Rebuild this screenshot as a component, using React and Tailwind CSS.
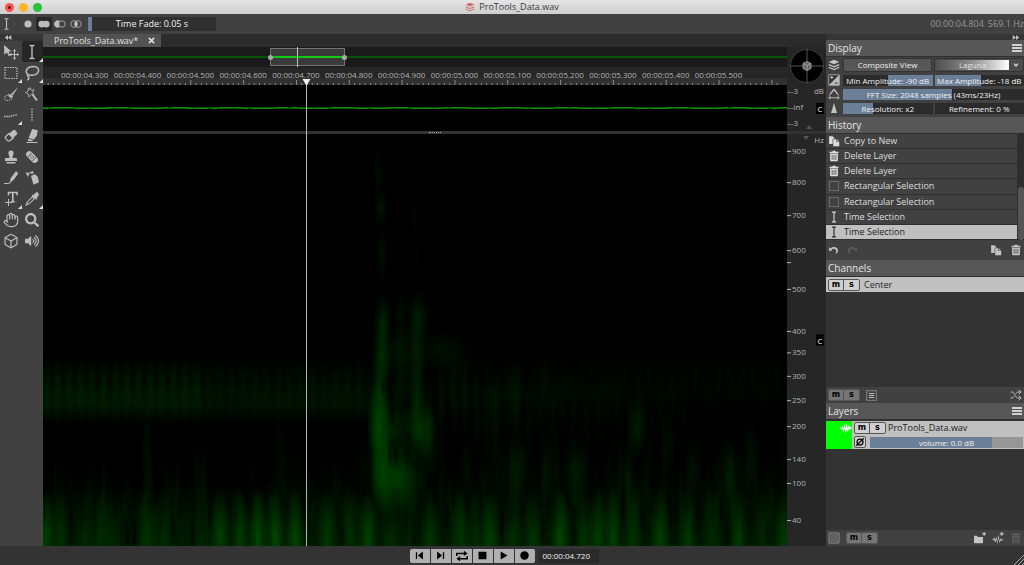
import { Hand, Box, Shuffle } from "lucide-react";
import { FaSearch, FaVolumeUp } from "react-icons/fa";
import clsx from "clsx";

const overviewWindow = { start: 30.5, width: 10.1, cursor: 34.1 };
const playhead = 35.4;

const timeLabels = [
  "00:00:04.300", "00:00:04.400", "00:00:04.500", "00:00:04.600", "00:00:04.700",
  "00:00:04.800", "00:00:04.900", "00:00:05.000", "00:00:05.100", "00:00:05.200",
  "00:00:05.300", "00:00:05.400", "00:00:05.500",
];

const frequencies = [
  [900, 4.1], [800, 11.7], [700, 19.7], [600, 28.2], [500, 37.6], [400, 47.8], [350, 53],
  [300, 58.7], [250, 64.6], [200, 70.9], [140, 78.9], [100, 84.7], [40, 93.7],
];

const history = [
  { name: "Copy to New", icon: "copy" },
  { name: "Delete Layer", icon: "trash" },
  { name: "Delete Layer", icon: "trash" },
  { name: "Rectangular Selection", icon: "square" },
  { name: "Rectangular Selection", icon: "square" },
  { name: "Time Selection", icon: "beam" },
  { name: "Time Selection", icon: "beam", active: true },
];

const tools = [
  { name: "Move", icon: "move" },
  { name: "Time selection", icon: "beam", active: true, more: true },
  { name: "Rectangle selection", icon: "marquee", more: true },
  { name: "Lasso", icon: "lasso", more: true },
  { name: "Brush selection", icon: "brushSelect" },
  { name: "Magic wand", icon: "wand" },
  { name: "Harmonics", icon: "harmonics", more: true },
  { name: "Frequency line", icon: "dots" },
  { name: "Eraser", icon: "eraser" },
  { name: "Amplify", icon: "marker" },
  { name: "Clone stamp", icon: "stamp" },
  { name: "Heal", icon: "bandage" },
  { name: "Pencil", icon: "pencil" },
  { name: "Spray", icon: "spray" },
  { name: "Text", icon: "text", more: true },
  { name: "Pick", icon: "dropper", more: true },
  { name: "Pan", icon: "hand" },
  { name: "Zoom", icon: "zoom" },
  { name: "3D", icon: "cube" },
  { name: "Play", icon: "speaker" },
];

const icons = {
  beam: <path d="M5.500 1.500h1.700l.8.600.8-.600h1.700M8 2v12M5.500 14.500h1.700l.8-.600.8.600h1.700" fill="none" stroke="currentColor" strokeWidth="1.400" />,
  move: (
    <>
      <path d="M1 1l7.500 6.500-3 .2 1.800 3.700-1.500.8-1.900-3.800L1.300 10.700z" />
      <path d="M11.500 6v8.500M7.500 10.500h8" stroke="currentColor" strokeWidth="1" />
      <path d="M11.500 5l1.700 2.200H9.800zM11.500 16l1.700-2.200H9.800zM6.300 10.500l2.100-1.700v3.400zM16 10.500l-2-1.700v3.400z" />
    </>
  ),
  marquee: <rect x="2" y="2.500" width="12" height="11" fill="none" stroke="currentColor" strokeDasharray="1.500 1" strokeWidth="1.200" />,
  lasso: <path d="M4.500 10C1 8 1.500 3.500 6 2c5-1.500 9.500.5 8.500 4-1 3.500-5 4.700-9 3.900-2-.6-2.500 1-1.300 1.700 1.300.8.8 2.400-.8 3.400" fill="none" stroke="currentColor" strokeWidth="1.500" />,
  brushSelect: (
    <>
      <path d="M15 1L10.500 8.500 9 9.500 7.800 8.500z" />
      <path d="M6.500 8.200l3.300 2.500-2 1.300-2.800-2z" />
      <ellipse cx="5.500" cy="11.500" rx="4" ry="2.800" fill="none" stroke="currentColor" strokeDasharray="1.400 1" transform="rotate(-25 5.500 11.500)" />
    </>
  ),
  wand: (
    <>
      <path d="M8.500 8.500l4.500 6" stroke="currentColor" strokeWidth="2" />
      <path d="M6 1.500l1.200 2.700 3-.5-1.800 2.500 1.500 2.700-3-.3L5 11l-.6-3L1.500 6.700l2.600-1.400L4 2.500l1.500 1z" fill="none" stroke="currentColor" strokeWidth=".8" />
    </>
  ),
  harmonics: <path d="M1 9.500h1.500m.8 0h1.500m.8 0h1.500m.7-.5h1.500m.8-.7h1.500m.8-.5h1.500" stroke="currentColor" strokeWidth="1.300" />,
  dots: <path d="M8 1.500v13" stroke="currentColor" strokeWidth="1.300" strokeDasharray="1.500 1.200" />,
  eraser: (
    <>
      <path d="M6 5.500L10.500 2q1-.7 1.700.2l2 2.500q.6.900-.2 1.600l-4 4z" />
      <path d="M6 5.500L2.800 8.500q-1 .9-.2 1.900l2 2.200q.9.900 1.900.1L10 10.300z" fill="none" stroke="currentColor" strokeWidth="1.300" />
    </>
  ),
  marker: (
    <>
      <path d="M8.200 1l5.500 1.300-.8 5.500-3.200 4-5-2z" />
      <path d="M4.300 10.400l4.700 1.900-1.200 1-4-.3zM2.500 14h11v1h-11z" />
    </>
  ),
  stamp: <path d="M8 1.500a2.600 2.600 0 0 1 2.600 2.700c0 1.500-1.200 2-1 4.800H13q1 0 1 1v2H2v-2q0-1 1-1h3.400c.2-2.800-1-3.300-1-4.800A2.600 2.600 0 0 1 8 1.500zM3.500 13h9v1.500h-9z" />,
  bandage: (
    <g transform="rotate(45 8 8)">
      <rect x="1" y="4.800" width="14" height="6.400" rx="3.200" />
      <path d="M5 5v6M11 5v6" stroke="#414141" strokeWidth=".8" />
      <path d="M6.500 7h1m1 0h1m-3 2h1m1 0h1" stroke="#414141" strokeWidth="1" />
    </g>
  ),
  pencil: (
    <>
      <path d="M14.500 2.500l-1-1q-.7-.3-1.300.5L7.500 8.500 7 12l3.300-1.700L15 4z" />
      <path d="M1 13.500h3l3-.5 2.500-3.500" fill="none" stroke="currentColor" />
    </>
  ),
  spray: (
    <>
      <path d="M1.500 2.500l4 .5-1.500 4zM6.500 2l2.300-1 1 2-2 1zM7 6l3.500-1.700 3 2 1.500 6-5.500 2.500z" />
      <path d="M5 3l3-.5" stroke="currentColor" strokeWidth="1" />
    </>
  ),
  text: (
    <>
      <path d="M5.500 4.200V1.500h8.500v2.700M9.800 1.500v9.200M7.800 10.800h4" fill="none" stroke="currentColor" strokeWidth="1.600" />
      <path d="M2 11.500h7M5.500 8v7" stroke="currentColor" strokeWidth="1" />
    </>
  ),
  dropper: (
    <>
      <path d="M14.300 1.700q-1.500-1.200-3 .3L9.500 4l-.8-.6-1 1 4.600 4.400 1-1-.7-.8 1.700-1.900q1.200-1.200 0-2.400z" />
      <path d="M8.300 5.800L3.500 10.700 2 14l3.300-1.400 5-4.800z" fill="none" stroke="currentColor" strokeWidth="1.100" />
    </>
  ),
  copy: (
    <>
      <path d="M1.500 1.500H6L8.500 4v1H6.200v7H1.500z" />
      <path d="M7 5.800h4v3.500h4v5.700H7z" />
      <path d="M11.800 5.500l3.200 3h-3.200z" />
    </>
  ),
  trash: (
    <>
      <path d="M6 1h4v1.300h4v1.900H2V2.300h4zM2.800 5h10.400v8.500q0 1.500-1.500 1.500H4.300q-1.500 0-1.500-1.500z" />
      <path d="M5.500 6.500v6.700M8 6.500v6.700M10.500 6.500v6.700" stroke="#414141" strokeWidth="1" />
    </>
  ),
  square: <rect x="2" y="2" width="12" height="12" fill="none" stroke="#707070" strokeWidth="1.200" />,
  layers: (
    <>
      <path d="M8 1l7 3-7 3-7-3z" />
      <path d="M1 7.500l7 3 7-3M1 11l7 3 7-3" fill="none" stroke="currentColor" strokeWidth="1.600" />
    </>
  ),
  contrast: (
    <>
      <path d="M1 1h14v14H1z" fill="#333" stroke="#bbb" />
      <path d="M15 1v14H1z" fill="#bbb" />
      <path d="M3 4.500h4M5 2.500v4" stroke="#ccc" strokeWidth="1.300" />
      <path d="M9 12h4" stroke="#333" strokeWidth="1.300" />
    </>
  ),
  fft: (
    <>
      <path d="M3 8l5-6 5 6" fill="none" stroke="currentColor" strokeWidth="1.600" />
      <path d="M1 13h14M3.500 11L1 13l2.500 2M12.500 11l2.500 2-2.500 2M3 8L2 10M13 8l1 2" fill="none" stroke="currentColor" strokeWidth="1.200" />
    </>
  ),
  cone: <path d="M8 1l2.500 9 1.500 4.500H4L5.500 10z" />,
  undo: <path d="M1.500 3v5.500h5L4.900 6.700C8 4 12 5.500 12 9c0 1.700-.7 3-2 4 3-.7 4.500-2.500 4.500-5 0-4.800-6-7-10.800-3z" />,
  wave: <path d="M0 7.500h2l1.200-3L4.500 9 6 2l1.500 7L8.800 0l1.500 9L12 3l1 4.500L14.200 6l.8 1.500h1v1.200h-1.500l-1 2-1.500-2-1.500 5L9 9.500 7.500 16 6 9l-1.500 5L3 9H0z" />,
  waveAdd: (
    <>
      <path d="M0 10l2-1 1-2 1.300 4L6 6l1.300 8L8.500 3 10 12l1.500-4 1 2H15v1.200h-3.500l-1.500 3L8.500 9l-1.200 7L6 10l-1.500 4L3 11z" />
      <path d="M13 0v5M10.500 2.500h5" stroke="currentColor" strokeWidth="1.600" />
    </>
  ),
  folderAdd: (
    <>
      <path d="M0 5h4l1 1.500h7V14q0 1-1 1H1q-1 0-1-1z" />
      <path d="M13.500 0v5M11 2.500h5" stroke="currentColor" strokeWidth="1.600" />
    </>
  ),
  list: (
    <>
      <rect x="1" y="1" width="14" height="14" fill="none" stroke="currentColor" strokeDasharray="1.500 1" strokeWidth="1.300" />
      <path d="M4 5h8M4 8h8M4 11h8" stroke="currentColor" strokeWidth="1.600" />
    </>
  ),
  phase: (
    <>
      <circle cx="8" cy="8" r="4.800" fill="none" stroke="currentColor" strokeWidth="2" />
      <path d="M2 14L14 2" stroke="currentColor" strokeWidth="2" />
    </>
  ),
  target: (
    <>
      <circle cx="8" cy="8" r="6" fill="none" stroke="currentColor" />
      <path d="M4 4l8 8M12 4l-8 8" stroke="currentColor" />
    </>
  ),
  circle: <circle cx="8" cy="8" r="4.800" />,
  union: (
    <>
      <circle cx="5" cy="8" r="4.500" />
      <circle cx="11" cy="8" r="4.500" />
    </>
  ),
  subtract: (
    <>
      <circle cx="10.500" cy="8" r="4.300" fill="none" stroke="currentColor" />
      <path d="M8 4.600A4.600 4.600 0 1 0 8 11.400a5 5 0 0 1 0-6.800z" />
    </>
  ),
  intersect: (
    <>
      <circle cx="5.500" cy="8" r="4.500" fill="none" stroke="currentColor" />
      <circle cx="10.500" cy="8" r="4.500" fill="none" stroke="currentColor" />
      <path d="M8 4.200a4.800 4.800 0 0 1 0 7.600 4.800 4.800 0 0 1 0-7.600z" />
    </>
  ),
  menu: <path d="M0 1.500h16v3.200H0zM0 6.400h16v3.200H0zM0 11.300h16v3.200H0z" />,
  toStart: <path d="M1.500 2h2.300v12H1.500zM14 1v14L5 8z" />,
  toEnd: <path d="M12.200 2h2.300v12h-2.300zM2 1v14l9-7z" />,
  loop: (
    <>
      <path d="M1 8V4.500h10M15 8v3.500H5" fill="none" stroke="currentColor" strokeWidth="2" />
      <path d="M10.500 1l5 3.500-5 3.500zM5.500 8l-5 3.500 5 3.500z" />
    </>
  ),
  stop: <path d="M1 1.500h14v13H1z" />,
  play: <path d="M3 1l12 7-12 7z" />,
  record: <circle cx="8" cy="8" r="7.500" />,
};

function Icon({ name, className = "size-4" }) {
  if (name === "hand") return <Hand className={className} strokeWidth={1.8} />;
  if (name === "cube") return <Box className={className} strokeWidth={1.8} />;
  if (name === "zoom") return <FaSearch className="size-3.5" />;
  if (name === "speaker") return <FaVolumeUp className="size-3.5" />;
  return (
    <svg viewBox="0 0 16 16" className={className} fill="currentColor" aria-hidden="true">
      {icons[name]}
    </svg>
  );
}

function FillSlider({ label, from = 0, to = 0, className = "bg-[#2b2b2b]" }) {
  return (
    <label className={clsx("relative flex h-[11px] flex-1 items-center justify-center", className)}>
      <span className="absolute inset-y-0 bg-[#6c7f99]" style={{ left: `${from}%`, width: `${to - from}%` }} />
      <span className="relative whitespace-pre text-[8px] leading-[11px] text-[#f0f0f0]">{label}</span>
      <input type="range" defaultValue={to} className="absolute inset-0 size-full opacity-0" />
    </label>
  );
}

function MuteSolo({ dim }) {
  const cell = "flex w-[15px] items-center justify-center font-['DejaVu_Sans',sans-serif] text-[8px] leading-[10px] font-bold text-black";
  return (
    <div className={clsx("flex h-3 shrink-0 rounded-xs border border-[#555]", dim ? "bg-[#757575]" : "bg-[#d0d0d0]")}>
      <button className={clsx(cell, "border-r border-[#555]")}>m</button>
      <button className={cell}>s</button>
    </div>
  );
}

function PanelHeader({ title, menu }) {
  return (
    <div className="flex h-[17px] shrink-0 items-center justify-between border-b border-[#303030] bg-[#575757] px-0.5 text-[#e6e6e6]">
      <h2 className="text-[10px] leading-4">{title}</h2>
      {menu && (
        <button aria-label={`${title} menu`} className="text-[#cfcfcf]">
          <Icon name="menu" className="size-[10px]" />
        </button>
      )}
    </div>
  );
}

function TitleBar() {
  return (
    <header className="relative flex h-3.5 shrink-0 items-center justify-center bg-linear-to-b from-[#e4e4e4] to-[#cecece]">
      <div className="absolute left-[5px] flex gap-[5px]">
        <span className="flex size-[9px] items-center justify-center rounded-full bg-[#fc5550]">
          <span className="size-[3px] rounded-full bg-[#5c0d0b]" />
        </span>
        <span className="size-[9px] rounded-full bg-[#fdb427]" />
        <span className="size-[9px] rounded-full bg-[#28c339]" />
      </div>
      <Icon name="layers" className="mr-1 size-[10px] text-[#cf6a6a]" />
      <h1 className="text-[9px] leading-3 text-[#3a3a3a]">ProTools_Data.wav</h1>
    </header>
  );
}

function Toolbar() {
  return (
    <div className="flex h-5 shrink-0 items-center overflow-hidden bg-[#414141] text-[#bdbdbd]">
      <div className="flex w-[18px] justify-center border-r border-[#363636] pr-1">
        <Icon name="beam" className="size-3.5" />
      </div>
      <div className="flex w-[68px] shrink-0 pl-0.5">
        {["circle", "union", "subtract", "intersect"].map((name) => (
          <button
            key={name}
            aria-label={name}
            className={clsx("flex h-3.5 w-4 items-center justify-center", name === "union" && "bg-[#282828]")}
          >
            <Icon name={name} className="size-3" />
          </button>
        ))}
      </div>
      <label className="relative ml-0.5 flex h-3.5 w-32 items-center justify-center bg-[#303030]">
        <span className="absolute inset-y-0 left-0 w-1 bg-[#6c7f99]" />
        <span className="text-[9px] text-[#f0f0f0]">Time Fade: 0.05 s</span>
        <input type="range" defaultValue={2} className="absolute inset-0 size-full opacity-0" />
      </label>
      <div className="ml-auto flex gap-1 whitespace-nowrap text-[9px] text-[#979797]">
        <span>00:00:04.804</span>
        <span>569.1 Hz</span>
      </div>
    </div>
  );
}

function ToolPalette() {
  return (
    <aside className="w-[43px] shrink-0 bg-[#414141] text-[#bdbdbd]">
      <div className="flex h-[7px] items-center bg-[#353535] pl-1">
        <svg viewBox="0 0 8 6" className="h-[5px] w-2" fill="currentColor">
          <path d="M4 0v6L0 3zM8 0v6L4 3z" />
        </svg>
      </div>
      <div className="grid grid-cols-2">
        {tools.map((tool) => (
          <button
            key={tool.name}
            aria-label={tool.name}
            className={clsx("relative flex h-[21px] items-center justify-center", tool.active && "rounded-xs bg-[#262626]")}
          >
            <Icon name={tool.icon} />
            {tool.more && (
              <svg viewBox="0 0 4 4" className="absolute right-0 bottom-0 size-1" fill="#ddd">
                <path d="M4 0v4H0z" />
              </svg>
            )}
          </button>
        ))}
      </div>
    </aside>
  );
}

function Overview() {
  return (
    <div className="relative h-5 shrink-0 bg-[#1a1a1a]">
      <div className="absolute inset-x-0 top-[9px] h-0.5 bg-[#0a520a]" />
      <div
        className="absolute inset-y-px border border-[#757575] bg-[#3a3a3a]"
        style={{ left: `${overviewWindow.start}%`, width: `${overviewWindow.width}%` }}
      >
        <div className="absolute inset-x-0 top-[7px] h-0.5 bg-[#12c812]" />
        <span className="absolute top-1.5 -left-[3px] size-[5px] rounded-full bg-[#a8a8a8]" />
        <span className="absolute top-1.5 -right-[3px] size-[5px] rounded-full bg-[#a8a8a8]" />
      </div>
      <div className="absolute inset-y-0 w-px bg-[#c4c4c4]" style={{ left: `${overviewWindow.cursor}%` }} />
    </div>
  );
}

function TimeRuler() {
  // 100 ms is 7.1% of the visible range, split in ten
  const ticks = Array.from({ length: 140 }, (_, i) => i - 8);
  return (
    <svg className="h-[18px] w-full shrink-0 bg-[#262626]">
      <rect y="11" width="100%" height="7" fill="#303030" />
      {ticks.map((i) => (
        <rect
          key={i}
          x={`${5.6 + i * 0.71}%`}
          y={i % 10 === 0 ? 13 : 16}
          width="1"
          height={i % 10 === 0 ? 5 : 2}
          fill="#8a8a8a"
        />
      ))}
      {timeLabels.map((label, i) => (
        <text key={label} x={`${5.6 + i * 7.1}%`} y="11" textAnchor="middle" fontSize="8" fill="#b4b4b4">
          {label}
        </text>
      ))}
    </svg>
  );
}

function Waveform() {
  const marks = Array.from({ length: 93 }, (_, i) => ({ x: i * 8, w: 3 + ((i * 7) % 5), up: (i * 13) % 7 > 3 }));
  return (
    <svg viewBox="0 0 744 46" preserveAspectRatio="none" className="h-[46px] w-full shrink-0 bg-black">
      <rect y="22" width="744" height="2" fill="#055505" />
      {marks.map((m) => (
        <rect key={m.x} x={m.x} y={m.up ? 22 : 23} width={m.w + 2} height="1" fill="#0a960a" />
      ))}
    </svg>
  );
}

// [x, strength] of the low-frequency rumble
const rumble = [
  [2, 0.9], [17, 0.5], [42, 0.35], [57, 0.45], [69, 0.3], [104, 0.6], [120, 0.45], [142, 0.1], [159, 0.35],
  [177, 0.85], [197, 0.75], [215, 1], [232, 1], [252, 0.95], [284, 0.7], [307, 0.5], [325, 0.9], [347, 0.45],
  [366, 0.2], [387, 0.65], [417, 0.7], [433, 0.4], [447, 0.8], [470, 0.5], [490, 0.65], [517, 1], [540, 0.55],
  [555, 0.8], [570, 0.9], [590, 0.6], [617, 0.8], [645, 0.7], [670, 0.4], [695, 0.8], [720, 0.35], [741, 0.8],
];

// [x, y, rx, ry, strength]
const hits = [
  [335, 40, 4, 30, 0.22], [338, 74, 8, 20, 0.3], [339, 120, 6, 28, 0.25], [372, 84, 4, 22, 0.1], [374, 122, 5, 16, 0.07],
  [340, 188, 10, 30, 0.45], [339, 220, 10, 40, 0.6], [375, 184, 12, 28, 0.42], [374, 218, 10, 36, 0.4],
  [357, 216, 20, 26, 0.32], [358, 182, 8, 26, 0.2], [395, 216, 26, 22, 0.2], [412, 222, 22, 24, 0.12],
  [337, 260, 10, 44, 0.6], [336, 296, 12, 54, 1], [340, 340, 12, 46, 0.8], [374, 262, 10, 40, 0.5],
  [347, 296, 24, 32, 0.5], [376, 296, 18, 34, 0.7], [354, 344, 30, 36, 0.85], [386, 308, 12, 40, 0.25],
  [357, 255, 14, 40, 0.25],
  [594, 294, 11, 34, 0.4], [533, 338, 16, 38, 0.3], [474, 336, 10, 44, 0.3], [503, 334, 8, 44, 0.25],
  [624, 310, 9, 36, 0.2], [586, 350, 7, 50, 0.3], [472, 262, 7, 40, 0.22], [450, 270, 7, 40, 0.2], [502, 256, 6, 44, 0.12],
  [688, 346, 8, 44, 0.25], [710, 330, 8, 46, 0.2], [104, 322, 6, 60, 0.2], [236, 318, 7, 40, 0.12],
];

const hitGaps = [
  [345, 205], [347, 322], [353, 322], [366, 302], [366, 210], [364, 322], [340, 252], [366, 268], [349, 282],
  [351, 245], [386, 245], [366, 180],
];

function rand(n) {
  const v = Math.sin(n * 127.1) * 43758.5453;
  return v - Math.floor(v);
}

function Spectrogram() {
  const hum = Array.from({ length: 64 }, (_, i) => ({ x: i * 11.6 + 3, o: i < 14 ? 0.24 : i < 28 ? 0.15 : 0.05 }));
  const haze = Array.from({ length: 150 }, (_, i) => ({
    x: i * 5 + rand(i) * 4,
    y: (i < 62 ? 352 : 334) + rand(i + 300) * 50,
    rx: 4 + rand(i + 600) * 4,
    ry: 30 + rand(i + 900) * 36,
    o: 0.06 + rand(i + 1200) * 0.18,
  }));
  const gaps = Array.from({ length: 110 }, (_, i) => ({
    x: i * 6.8 + rand(i + 50) * 5,
    y: 325 + rand(i + 350) * 80,
    ry: 14 + rand(i + 650) * 20,
  }));
  const tail = Array.from({ length: 24 }, (_, i) => ({ x: 386 + i * 11 + rand(i) * 4, o: 0.2 - i * 0.006 }));
  return (
    <svg viewBox="0 0 744 412" preserveAspectRatio="none" className="absolute inset-0 size-full bg-black">
      <defs>
        <radialGradient id="glow">
          <stop offset="0" stopColor="#004600" />
          <stop offset="0.5" stopColor="#004600" stopOpacity="0.5" />
          <stop offset="1" stopColor="#004600" stopOpacity="0" />
        </radialGradient>
        <radialGradient id="gap">
          <stop offset="0" stopColor="#000" />
          <stop offset="1" stopColor="#000" stopOpacity="0" />
        </radialGradient>
        <linearGradient id="floor" x2="0" y2="1">
          <stop offset="0" stopColor="#001800" stopOpacity="0" />
          <stop offset="1" stopColor="#001800" />
        </linearGradient>
        <linearGradient id="band" x2="0" y2="1">
          <stop offset="0" stopColor="#001200" stopOpacity="0" />
          <stop offset="0.3" stopColor="#001200" stopOpacity="0.5" />
          <stop offset="0.7" stopColor="#001200" />
          <stop offset="1" stopColor="#001200" stopOpacity="0" />
        </linearGradient>
      </defs>
      <rect x="0" y="224" width="160" height="66" fill="url(#band)" />
      <rect x="160" y="224" width="170" height="66" fill="url(#band)" opacity="0.7" />
      <rect x="400" y="220" width="344" height="54" fill="url(#band)" opacity="0.25" />
      {hum.map((s) => (
        <g key={s.x}>
          <ellipse cx={s.x} cy="256" rx="7" ry="38" fill="url(#glow)" opacity={s.o} />
          <ellipse cx={s.x + 5.8} cy="247" rx="3.500" ry="13" fill="url(#gap)" opacity="0.7" />
        </g>
      ))}
      {tail.map((s) => (
        <ellipse key={s.x} cx={s.x} cy={262 + rand(s.x) * 30} rx="6" ry="44" fill="url(#glow)" opacity={s.o} />
      ))}
      {haze.map((s) => (
        <ellipse key={s.x} cx={s.x} cy={s.y} rx={s.rx} ry={s.ry} fill="url(#glow)" opacity={s.o} />
      ))}
      <rect y="352" width="744" height="60" fill="url(#floor)" />
      {gaps.map((s) => (
        <ellipse key={s.x} cx={s.x} cy={s.y} rx="3.500" ry={s.ry} fill="url(#gap)" opacity="0.75" />
      ))}
      {rumble.map(([x, o]) => (
        <ellipse key={x} cx={x} cy="404" rx="11" ry="50" fill="url(#glow)" opacity={o} />
      ))}
      {hits.map(([x, y, rx, ry, o]) => (
        <ellipse key={`${x}-${y}`} cx={x} cy={y} rx={rx} ry={ry} fill="url(#glow)" opacity={o} />
      ))}
      {hitGaps.map(([x, y]) => (
        <ellipse key={`${x}-${y}`} cx={x} cy={y} rx="3" ry="12" fill="url(#gap)" opacity="0.6" />
      ))}
    </svg>
  );
}

function Playhead() {
  return (
    <div className="pointer-events-none absolute top-8 bottom-0 w-px bg-[#b4b4b4]" style={{ left: `${playhead}%` }}>
      <svg viewBox="0 0 8 6" className="absolute top-0 -left-1 h-1.5 w-[9px]" fill="#eee">
        <path d="M0 0h8L4.500 6h-1z" />
      </svg>
    </div>
  );
}

function ChannelBadge() {
  return <span className="flex h-[11px] w-2 items-center justify-center bg-black text-[8px] text-white">C</span>;
}

function Scales() {
  return (
    <div className="flex w-[39px] shrink-0 flex-col bg-[#262626] text-[8px] text-[#b4b4b4]">
      <div className="flex h-[38px] items-center justify-center">
        <svg viewBox="0 0 34 34" className="size-[34px]">
          <circle cx="17" cy="17" r="16.500" fill="#000" stroke="#3d3d3d" />
          <path d="M17 0v34M0 17h34" stroke="#555" />
          <path d="M17 12.500l4 2v5l-4 2-4-2v-5z" fill="#666" stroke="#999" />
          <path d="M13 14.500l4 2 4-2M17 16.500v5" fill="none" stroke="#aaa" strokeWidth=".8" />
        </svg>
      </div>
      <div className="flex h-[46px] justify-between pr-0.5">
        <div className="flex flex-col justify-between pb-0.5 leading-3">
          <span>–-3</span>
          <span>–-inf</span>
          <span>–-3</span>
        </div>
        <svg viewBox="0 0 6 4" className="mb-0.5 h-1 w-1.5 self-end" fill="#555">
          <path d="M3 0l3 4H0z" />
        </svg>
        <div className="flex flex-col items-end gap-1.5 leading-3">
          <span>dB</span>
          <ChannelBadge />
        </div>
      </div>
      <div className="h-[3px] bg-[#333]" />
      <div className="relative flex-1">
        <svg className="absolute inset-0 size-full">
          <path d="M16 2h6l-3 4z" fill="#555" />
          <text x="37" y="9" textAnchor="end" fontSize="8" fill="#b4b4b4">Hz</text>
          <rect x="0" y="31.1%" width="4" height="1" fill="#b4b4b4" />
          {frequencies.map(([value, y]) => (
            <g key={value}>
              <rect x="0" y={`${y}%`} width="4" height="1" fill="#b4b4b4" />
              <text x="5" y={`${y}%`} dy="3" fontSize="8" fill="#b4b4b4">{value}</text>
            </g>
          ))}
        </svg>
        <div className="absolute top-1/2 right-0.5 -translate-y-1/2">
          <ChannelBadge />
        </div>
      </div>
    </div>
  );
}

function Editor() {
  return (
    <main className="flex min-w-0 flex-1 flex-col">
      <div className="flex h-[13px] shrink-0 bg-[#2b2b2b]">
        <div className="flex items-center gap-2.5 bg-[#525252] pr-1.5 pl-[11px] text-[9px] text-[#e0e0e0]">
          <span>ProTools_Data.wav*</span>
          <button aria-label="Close tab">
            <svg viewBox="0 0 8 8" className="size-[7px]" stroke="#ddd" strokeWidth="1.800">
              <path d="M1 1l6 6M7 1L1 7" />
            </svg>
          </button>
        </div>
      </div>
      <div className="flex min-h-0 flex-1">
        <div className="relative flex min-w-0 flex-1 flex-col">
          <Overview />
          <TimeRuler />
          <Waveform />
          <div className="flex h-[3px] shrink-0 items-center justify-center bg-[#333]">
            <span className="ml-10 w-3 border-t border-dotted border-[#aaa]" />
          </div>
          <div className="relative flex-1">
            <Spectrogram />
          </div>
          <Playhead />
        </div>
        <Scales />
      </div>
    </main>
  );
}

function DisplayPanel() {
  return (
    <section className="shrink-0 bg-[#414141] text-[#c4c4c4]">
      <PanelHeader title="Display" menu />
      <div className="pb-0.5">
        <div className="flex h-4 items-center gap-0.5 pl-0.5">
          <Icon name="layers" className="mr-px size-3" />
          <button className="h-3.5 flex-1 rounded-xs border border-[#333] bg-[#575757] text-[8px] leading-3 text-[#f0f0f0]">
            Composite View
          </button>
          <div className="flex h-3.5 flex-1 items-center rounded-xs border border-[#333] bg-[#4c4c4c] pl-px">
            <select
              aria-label="Color map"
              className="h-2.5 min-w-0 flex-1 appearance-none bg-linear-to-r from-[#505050] via-[#909090] to-white text-[8px] leading-[10px] text-[#e0e0e0] [text-align-last:center]"
            >
              <option>Laguna</option>
            </select>
            <svg viewBox="0 0 8 6" className="mx-1 h-1 w-1.5" fill="none" stroke="#ddd" strokeWidth="2">
              <path d="M1 1l3 3.500L7 1" />
            </svg>
          </div>
        </div>
        <div className="flex h-3.5 items-center gap-0.5 pl-0.5">
          <Icon name="contrast" className="mr-px size-3" />
          <FillSlider label="Min Amplitude: -90 dB" from={50} to={100} />
          <FillSlider label="Max Amplitude: -18 dB" to={52} />
        </div>
        <div className="flex h-3.5 items-center gap-0.5 pl-0.5">
          <Icon name="fft" className="mr-px size-3" />
          <FillSlider label="FFT Size: 2048 samples (43ms/23Hz)" to={60} />
        </div>
        <div className="flex h-3.5 items-center gap-0.5 pl-0.5">
          <Icon name="cone" className="mr-px size-3" />
          <FillSlider label="Resolution: x2" to={33} />
          <FillSlider label="Refinement: 0 %" />
        </div>
      </div>
    </section>
  );
}

function HistoryPanel() {
  return (
    <section className="flex min-h-0 flex-1 flex-col">
      <PanelHeader title="History" />
      <div className="flex min-h-0 flex-1 bg-[#2e2e2e]">
        <ul className="flex flex-1 flex-col">
          {history.map((item, i) => (
            <li
              key={i}
              className={clsx(
                "flex flex-1 items-center gap-1 border-b border-[#303030] pl-0.5 text-[9px] leading-3 font-medium",
                item.active ? "bg-[#c0c0c0] text-[#222]" : "bg-[#414141] text-[#dedede]"
              )}
            >
              <Icon name={item.icon} className="size-3" />
              {item.name}
            </li>
          ))}
        </ul>
        <div className="flex w-[7px] flex-col justify-end pl-px">
          <div className="h-1/2 rounded-full bg-[#555]" />
        </div>
      </div>
      <div className="flex h-5 shrink-0 items-center gap-2 bg-[#414141] px-0.5 text-[#c4c4c4]">
        <button aria-label="Undo"><Icon name="undo" className="size-[11px]" /></button>
        <button aria-label="Redo" className="-scale-x-100 text-[#5c5c5c]"><Icon name="undo" className="size-[11px]" /></button>
        <button aria-label="Copy" className="ml-auto"><Icon name="copy" className="size-3" /></button>
        <button aria-label="Delete"><Icon name="trash" className="size-3" /></button>
      </div>
    </section>
  );
}

function ChannelsPanel() {
  return (
    <section className="flex min-h-0 flex-1 flex-col">
      <PanelHeader title="Channels" />
      <div className="flex-1 bg-[#333]">
        <div className="flex h-[15px] items-center gap-1 bg-[#c0c0c0] pl-0.5 text-[9px] text-[#2a2a2a]">
          <MuteSolo />
          Center
        </div>
      </div>
      <div className="flex h-4 shrink-0 items-center gap-1.5 bg-[#414141] px-0.5 text-[#bbb]">
        <MuteSolo dim />
        <button aria-label="Select all"><Icon name="list" className="size-[11px]" /></button>
        <button aria-label="Routing" className="ml-auto"><Shuffle className="size-3 -scale-y-100" /></button>
      </div>
    </section>
  );
}

function LayersPanel() {
  return (
    <section className="flex min-h-0 flex-1 flex-col">
      <PanelHeader title="Layers" menu />
      <div className="flex-1 bg-[#333] pt-px">
        <div className="flex h-7 bg-[#c0c0c0] text-[#222]">
          <div className="flex w-[26px] justify-end bg-[#00ff00] pt-px text-white">
            <Icon name="wave" className="size-3" />
          </div>
          <div className="flex flex-1 flex-col justify-center gap-0.5 pl-0.5">
            <div className="flex items-center gap-0.5 text-[9px] leading-3">
              <MuteSolo />
              ProTools_Data.wav
            </div>
            <div className="flex items-center gap-1 pr-px">
              <button aria-label="Invert phase" className="rounded-xs border border-[#555] bg-[#d0d0d0] text-black">
                <Icon name="phase" className="size-[10px]" />
              </button>
              <FillSlider label="volume: 0.0 dB" to={80} className="bg-[#969696]" />
            </div>
          </div>
        </div>
      </div>
      <div className="flex h-4 shrink-0 items-center gap-1.5 bg-[#414141] px-0.5 text-[#c4c4c4]">
        <button aria-label="Target" className="rounded-xs bg-[#6a6a6a] p-px text-[#484848]">
          <Icon name="target" className="size-[10px]" />
        </button>
        <MuteSolo dim />
        <button aria-label="New group" className="ml-auto"><Icon name="folderAdd" className="size-3" /></button>
        <button aria-label="New layer"><Icon name="waveAdd" className="size-3" /></button>
        <button aria-label="Delete layer" className="text-[#5c5c5c]"><Icon name="trash" className="size-3" /></button>
      </div>
    </section>
  );
}

function Transport() {
  const buttons = ["toStart", "toEnd", "loop", "stop", "play", "record"];
  return (
    <footer className="relative flex h-[19px] shrink-0 items-center justify-center gap-1 bg-[#333] pr-4">
      <div className="flex h-3.5 gap-px overflow-hidden rounded-xs">
        {buttons.map((name) => (
          <button key={name} aria-label={name} className="flex w-5 items-center justify-center bg-[#b0b0b0] text-black">
            <Icon name={name} className={name === "loop" ? "size-3" : "size-[9px]"} />
          </button>
        ))}
      </div>
      <span className="w-[60px] bg-[#2a2a2a] pl-1 text-[8px] leading-[14px] text-[#f0f0f0]">00:00:04.720</span>
      <svg viewBox="0 0 10 10" className="absolute right-0 bottom-0 size-[10px]" stroke="#aaa">
        <path d="M0 10L10 0M4 10l6-6M8 10l2-2" />
      </svg>
    </footer>
  );
}

export default function App() {
  return (
    <div className="flex h-screen flex-col overflow-hidden bg-[#333] font-['Open_Sans','Noto_Sans',sans-serif]">
      <TitleBar />
      <Toolbar />
      <div className="flex min-h-0 flex-1">
        <ToolPalette />
        <Editor />
        <div className="flex w-[198px] shrink-0 flex-col">
          <div className="flex h-1.5 shrink-0 items-center justify-end bg-[#353535] pr-1">
            <svg viewBox="0 0 8 6" className="h-[5px] w-2" fill="#bbb">
              <path d="M0 0v6l4-3zM4 0v6l4-3z" />
            </svg>
          </div>
          <DisplayPanel />
          <HistoryPanel />
          <ChannelsPanel />
          <LayersPanel />
        </div>
      </div>
      <Transport />
    </div>
  );
}
